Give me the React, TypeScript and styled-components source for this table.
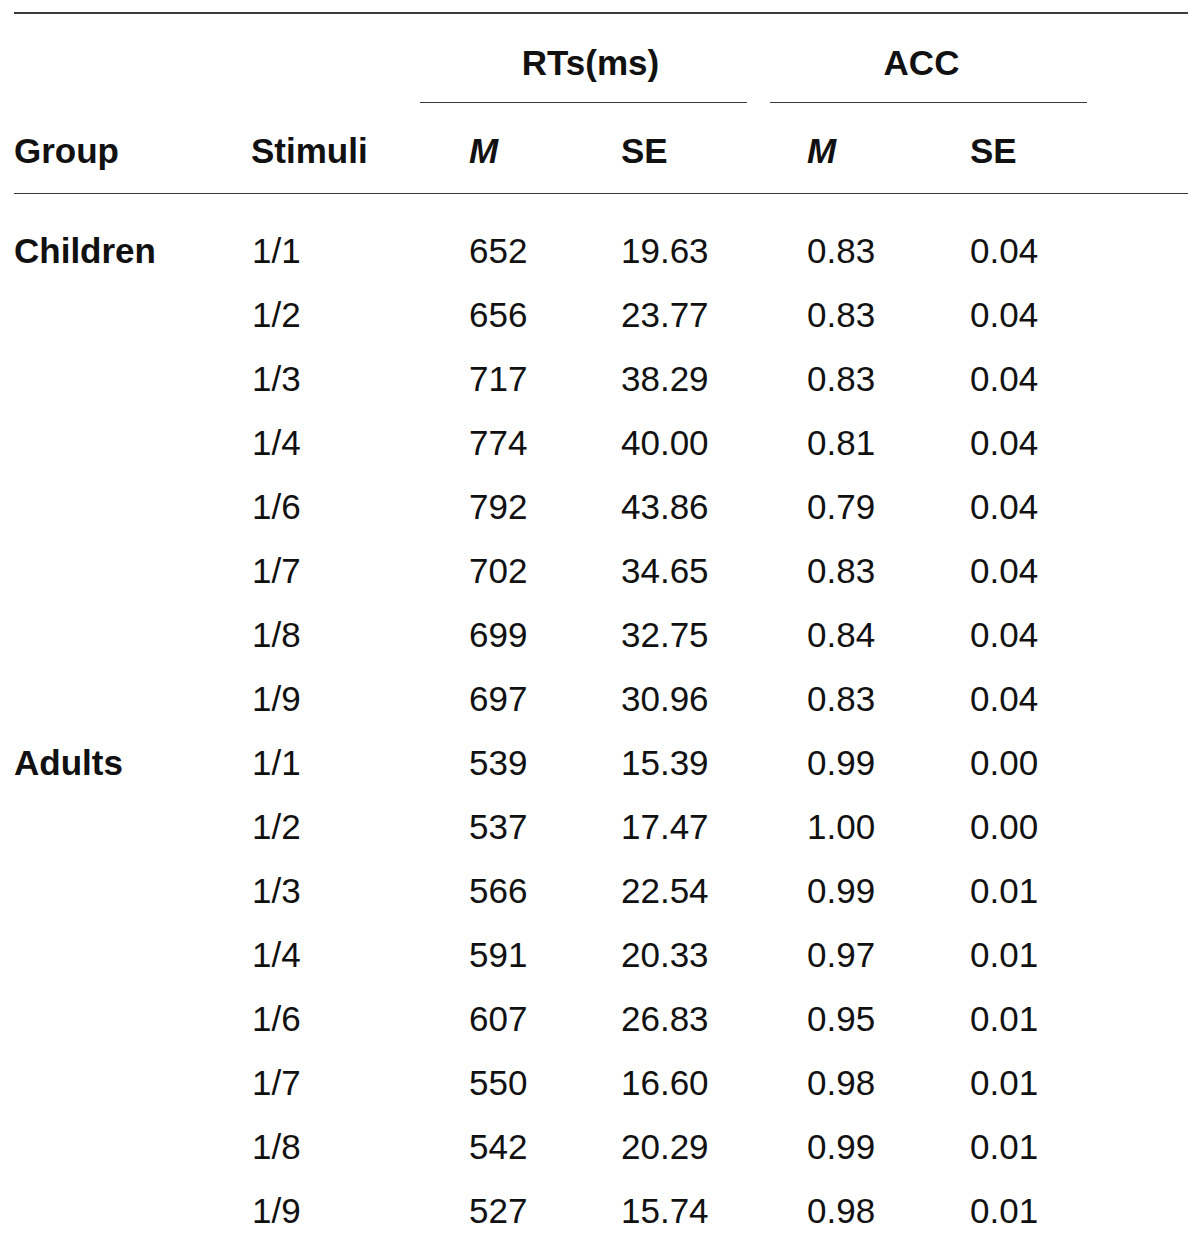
import styled, { createGlobalStyle } from "styled-components";

const GlobalStyle = createGlobalStyle`
  html, body {
    margin: 0;
    padding: 0;
    background: #fff;
  }
  body {
    font-family: "Liberation Sans", Arial, sans-serif;
    color: #111;
  }
`;

// column edges: 14 | 251 | 420 | 469 | 621 | 747 | 770 | 807 | 970 | 1087 | 1188
const columns = "237px 169px 49px 152px 126px 23px 37px 163px 117px 101px";

const Page = styled.div`
  width: 1200px;
  padding: 12px 12px 0 14px;
  box-sizing: border-box;
`;

const Rule = styled.div`
  width: 1174px;
  height: 1.5px;
  background: #3a3a3a;
`;

const Row = styled.div<{ $pad?: string }>`
  display: grid;
  grid-template-columns: ${columns};
  align-items: center;
  padding: ${(p) => p.$pad || "0"};
  font-size: 35px;
  line-height: 40px;
`;

const Spanner = styled.div<{ $from: number; $to: number; $shift?: number }>`
  grid-column: ${(p) => p.$from} / ${(p) => p.$to};
  font-weight: 700;
  text-align: center;
  padding: 29px 0 19px;
  border-bottom: 1.5px solid #3a3a3a;
  text-indent: ${(p) => p.$shift || 0}px;
`;

const Head = styled.div<{ $span?: number; $italic?: boolean }>`
  grid-column: span ${(p) => p.$span || 1};
  font-weight: 700;
  font-style: ${(p) => (p.$italic ? "italic" : "normal")};
`;

const Cell = styled.div<{ $span?: number; $bold?: boolean; $indent?: number }>`
  grid-column: span ${(p) => p.$span || 1};
  height: 64px;
  display: flex;
  align-items: center;
  padding-left: ${(p) => p.$indent || 0}px;
  font-weight: ${(p) => (p.$bold ? 700 : 400)};
  white-space: nowrap;
`;

const Body = styled.div`
  padding-top: 25px;
`;

const children = [
  ["1/1", "652", "19.63", "0.83", "0.04"],
  ["1/2", "656", "23.77", "0.83", "0.04"],
  ["1/3", "717", "38.29", "0.83", "0.04"],
  ["1/4", "774", "40.00", "0.81", "0.04"],
  ["1/6", "792", "43.86", "0.79", "0.04"],
  ["1/7", "702", "34.65", "0.83", "0.04"],
  ["1/8", "699", "32.75", "0.84", "0.04"],
  ["1/9", "697", "30.96", "0.83", "0.04"],
];

const adults = [
  ["1/1", "539", "15.39", "0.99", "0.00"],
  ["1/2", "537", "17.47", "1.00", "0.00"],
  ["1/3", "566", "22.54", "0.99", "0.01"],
  ["1/4", "591", "20.33", "0.97", "0.01"],
  ["1/6", "607", "26.83", "0.95", "0.01"],
  ["1/7", "550", "16.60", "0.98", "0.01"],
  ["1/8", "542", "20.29", "0.99", "0.01"],
  ["1/9", "527", "15.74", "0.98", "0.01"],
];

const DataRow = ({ group, values }: { group: string; values: string[] }) => (
  <Row>
    <Cell $bold>{group}</Cell>
    <Cell $span={2} $indent={1}>{values[0]}</Cell>
    <Cell>{values[1]}</Cell>
    <Cell $span={3}>{values[2]}</Cell>
    <Cell>{values[3]}</Cell>
    <Cell $span={2}>{values[4]}</Cell>
  </Row>
);

export default function App() {
  return (
    <Page>
      <GlobalStyle />
      <Rule />
      <Row>
        <Spanner $from={3} $to={6} $shift={14}>RTs(ms)</Spanner>
        <Spanner $from={7} $to={10} $shift={-14}>ACC</Spanner>
      </Row>
      <Row $pad="28px 0 22px">
        <Head>Group</Head>
        <Head $span={2}>Stimuli</Head>
        <Head $italic>M</Head>
        <Head $span={3}>SE</Head>
        <Head $italic>M</Head>
        <Head $span={2}>SE</Head>
      </Row>
      <Rule />
      <Body>
        {children.map((v, i) => (
          <DataRow key={"c" + i} group={i === 0 ? "Children" : ""} values={v} />
        ))}
        {adults.map((v, i) => (
          <DataRow key={"a" + i} group={i === 0 ? "Adults" : ""} values={v} />
        ))}
      </Body>
    </Page>
  );
}
